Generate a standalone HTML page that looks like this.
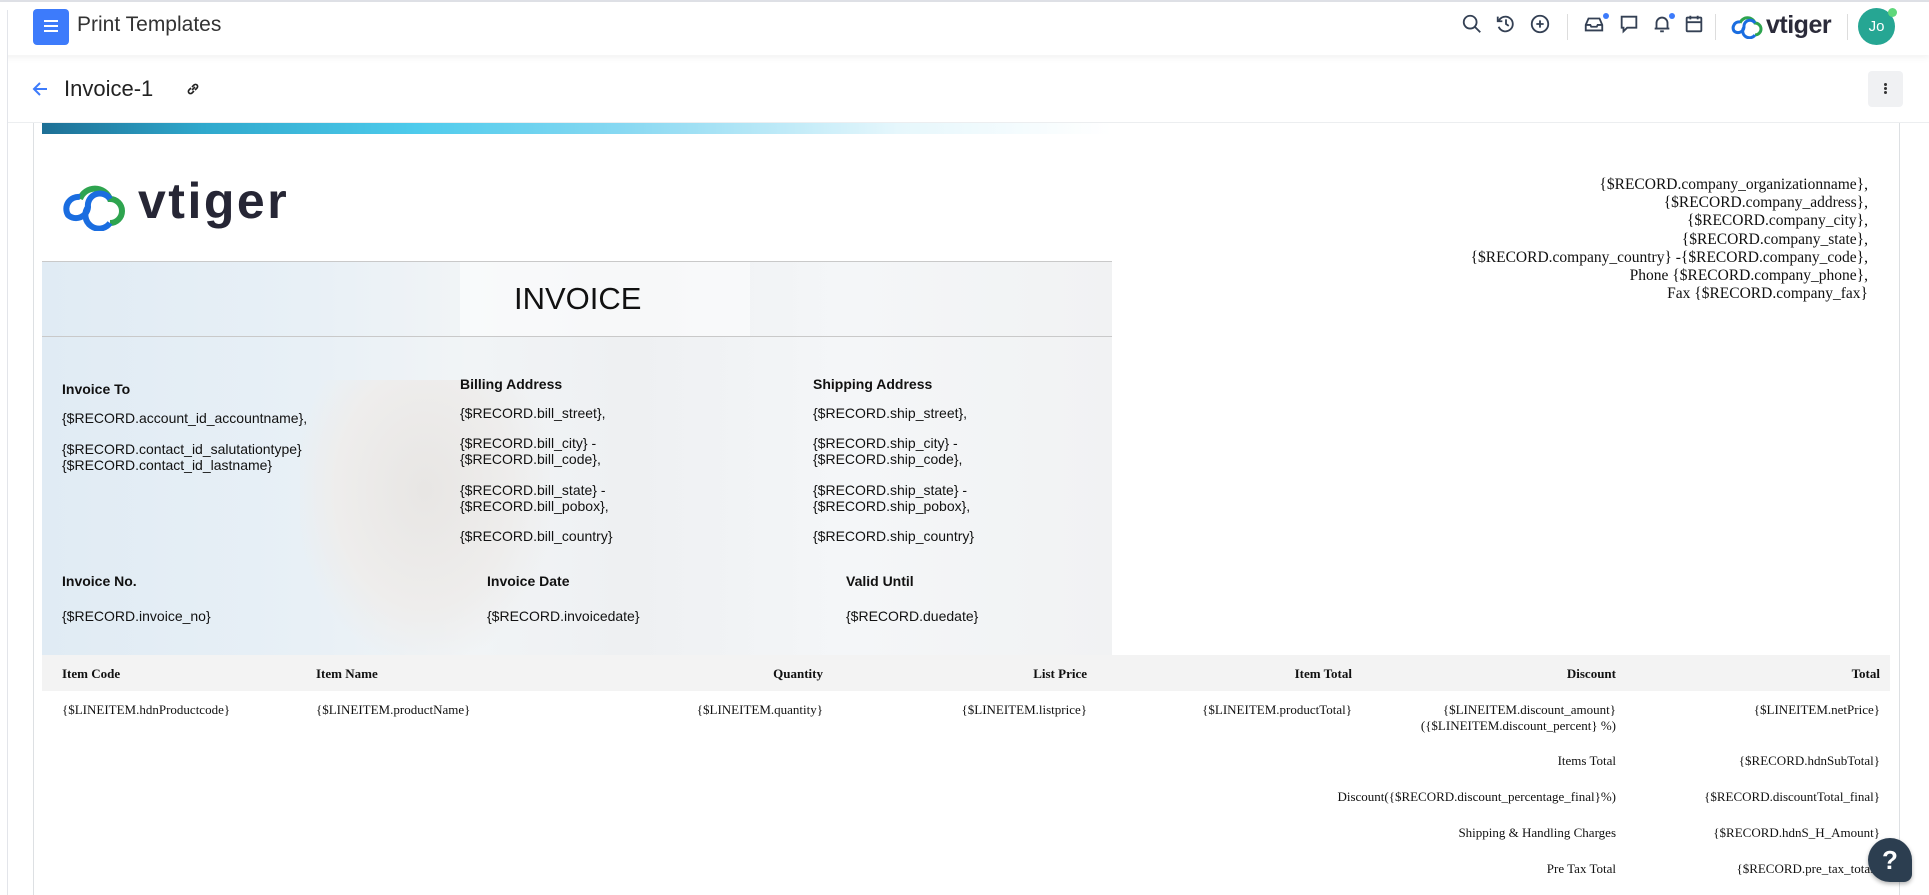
<!DOCTYPE html>
<html><head><meta charset="utf-8"><style>
*{margin:0;padding:0;box-sizing:border-box}
body{width:1929px;height:895px;overflow:hidden;background:#fff;font-family:"Liberation Sans",sans-serif;position:relative;color:#111}
.a{position:absolute;white-space:nowrap}
.s{font-family:"Liberation Sans",sans-serif;font-size:14px;line-height:16px;color:#111}
.b{font-weight:bold}
.t{font-family:"Liberation Serif",serif;font-size:13px;line-height:16px}
.r{text-align:right}
.ico{position:absolute;top:13px}
</style></head><body>
<div class="a" style="left:0;top:0;width:1929px;height:2px;background:#dfe1e6"></div>
<div class="a" style="left:0;top:2px;width:1929px;height:53px;background:#fff;box-shadow:0 3px 6px rgba(0,0,0,.05)"></div>
<div class="a" style="left:0;top:10px;width:8px;height:885px;border-right:1px solid #e3e5ea;background:#fff"></div>
<div class="a" style="left:33px;top:9px;width:36px;height:36px;background:#3d7bfb;border-radius:4px"></div>
<div class="a" style="left:44px;top:20px;width:14px;height:2px;background:#fff;box-shadow:0 5px 0 #fff,0 10px 0 #fff"></div>
<div class="a" style="left:77px;top:13px;font-size:21px;color:#333">Print Templates</div>

<svg class="ico" style="left:1461px" width="22" height="22" viewBox="0 0 24 24" fill="none" stroke="#344054" stroke-width="2"><circle cx="10" cy="10" r="7"/><path d="M15 15l6 6"/></svg>
<svg class="ico" style="left:1495px" width="22" height="22" viewBox="0 0 24 24" fill="none" stroke="#344054" stroke-width="2"><path d="M4 9a8 8 0 1 1 0 6"/><path d="M3 4v5h5"/><path d="M12 7v5l3 2"/></svg>
<svg class="ico" style="left:1529px" width="22" height="22" viewBox="0 0 24 24" fill="none" stroke="#344054" stroke-width="2"><circle cx="12" cy="12" r="9"/><path d="M12 8v8M8 12h8"/></svg>
<div class="a" style="left:1567px;top:14px;width:1px;height:26px;background:#ddd"></div>
<svg class="ico" style="left:1583px" width="22" height="22" viewBox="0 0 24 24" fill="none" stroke="#344054" stroke-width="2"><path d="M3 13l3-7h12l3 7v6H3z"/><path d="M3 13h5l1 2h6l1-2h5"/></svg>
<div class="a" style="left:1603px;top:13px;width:6px;height:6px;border-radius:3px;background:#3d7bfb"></div>
<svg class="ico" style="left:1618px" width="22" height="22" viewBox="0 0 24 24" fill="none" stroke="#344054" stroke-width="2"><path d="M4 4h16v12H10l-4 4v-4H4z"/></svg>
<svg class="ico" style="left:1651px" width="22" height="22" viewBox="0 0 24 24" fill="none" stroke="#344054" stroke-width="2"><path d="M6 17V11a6 6 0 0 1 12 0v6H6zM4 17h16M10 20h4"/></svg>
<div class="a" style="left:1669px;top:13px;width:6px;height:6px;border-radius:3px;background:#3d7bfb"></div>
<svg class="ico" style="left:1683px" width="22" height="22" viewBox="0 0 24 24" fill="none" stroke="#344054" stroke-width="2"><rect x="4" y="5" width="16" height="15" rx="1"/><path d="M4 10h16M8 3v4M16 3v4"/></svg>
<div class="a" style="left:1715px;top:14px;width:1px;height:26px;background:#ddd"></div>
<svg class="a" style="left:1731px;top:15px" width="34" height="24" viewBox="0 0 34 24" fill="none" stroke-width="3"><path d="M9 8a8 8 0 0 1 15 0 6 6 0 0 1 0 12" stroke="#2ea44f"/><path d="M24 8a6 6 0 0 0-11 4 6 6 0 0 1-10 4 6 6 0 0 1 6-9" stroke="#1a6de0"/><path d="M13 12a6 6 0 0 0 11 8" stroke="#1a6de0"/></svg>
<div class="a" style="left:1766px;top:11px;font-size:25px;font-weight:bold;color:#2b2b3a;letter-spacing:-0.5px">vtiger</div>
<div class="a" style="left:1847px;top:14px;width:1px;height:26px;background:#ddd"></div>
<div class="a" style="left:1858px;top:8px;width:37px;height:37px;border-radius:50%;background:#26a693;color:#fff;font-size:15px;line-height:37px;text-align:center">Jo</div>
<div class="a" style="left:1888px;top:8px;width:9px;height:9px;border-radius:50%;background:#5fd77b"></div>

<svg class="a" style="left:31px;top:80px" width="18" height="18" viewBox="0 0 18 18" fill="none" stroke="#3d7bfb" stroke-width="2"><path d="M16 9H3M9 3L3 9l6 6"/></svg>
<div class="a" style="left:64px;top:76px;font-size:22px;color:#222">Invoice-1</div>
<svg class="a" style="left:186px;top:82px" width="14" height="14" viewBox="0 0 14 14" fill="none" stroke="#222" stroke-width="1.6"><path d="M6 8l3-3M5 6L3 8a2 2 0 0 0 3 3l2-2M9 8l2-2a2 2 0 0 0-3-3L6 5"/></svg>
<div class="a" style="left:1868px;top:71px;width:35px;height:36px;border-radius:4px;background:#f0f1f3"></div>
<div class="a" style="left:1884px;top:83px;width:3px;height:3px;background:#333;border-radius:2px;box-shadow:0 4px 0 #333,0 8px 0 #333"></div>
<div class="a" style="left:8px;top:122px;width:1921px;height:1px;background:#eceef0"></div>

<div class="a" style="left:33px;top:123px;width:1px;height:772px;background:#dde0e3"></div>
<div class="a" style="left:1899px;top:123px;width:1px;height:772px;background:#dde0e3"></div>
<div class="a" style="left:42px;top:123px;width:1070px;height:11px;background:linear-gradient(90deg,#1d6f95 0%,#2fa8cc 15%,#4ecbec 35%,#8ad9f2 55%,#e6f7fc 80%,#fff 100%)"></div>

<div class="a" style="left:42px;top:261px;width:1070px;height:395px;background:linear-gradient(90deg,#e0ebf4 0%,#e8f0f6 25%,#f1f4f6 40%,#eef0f2 55%,#f4f6f8 75%,#f1f2f3 100%)"></div>
<div class="a" style="left:300px;top:380px;width:250px;height:276px;background:radial-gradient(ellipse at 50% 40%,#e8e6e4 0%,#eeedec 50%,rgba(240,241,242,0) 75%)"></div>
<div class="a" style="left:460px;top:261px;width:290px;height:75px;background:rgba(255,255,255,.5)"></div>
<div class="a" style="left:42px;top:261px;width:1070px;height:1px;background:#c9c9c9"></div>
<div class="a" style="left:42px;top:336px;width:1070px;height:1px;background:#c9c9c9"></div>

<svg class="a" style="left:62px;top:183px" width="70" height="48" viewBox="0 0 70 48" fill="none" stroke-width="6"><path d="M18 16a16 16 0 0 1 30 0 12 12 0 0 1 0 24" stroke="#2ea44f"/><path d="M48 16a12 12 0 0 0-22 8 12 12 0 0 1-20 8 12 12 0 0 1 12-18" stroke="#1a6de0"/><path d="M26 24a12 12 0 0 0 22 16" stroke="#1a6de0"/></svg>
<div class="a" style="left:138px;top:172px;font-size:50px;font-weight:bold;color:#262635;letter-spacing:2.5px">vtiger</div>

<div class="a" style="left:514px;top:281px;font-size:31px;color:#111">INVOICE</div>

<div class="a r" style="right:61px;top:176px;font-family:'Liberation Serif',serif;font-size:15.5px;line-height:18.2px;color:#111">{$RECORD.company_organizationname},<br>{$RECORD.company_address},<br>{$RECORD.company_city},<br>{$RECORD.company_state},<br>{$RECORD.company_country} -{$RECORD.company_code},<br>Phone {$RECORD.company_phone},<br>Fax {$RECORD.company_fax}</div>

<div class="a s b" style="left:62px;top:381px">Invoice To</div>
<div class="a s" style="left:62px;top:410px">{$RECORD.account_id_accountname},</div>
<div class="a s" style="left:62px;top:441px">{$RECORD.contact_id_salutationtype}<br>{$RECORD.contact_id_lastname}</div>

<div class="a s b" style="left:460px;top:376px">Billing Address</div>
<div class="a s" style="left:460px;top:405px">{$RECORD.bill_street},</div>
<div class="a s" style="left:460px;top:435px">{$RECORD.bill_city} -<br>{$RECORD.bill_code},</div>
<div class="a s" style="left:460px;top:482px">{$RECORD.bill_state} -<br>{$RECORD.bill_pobox},</div>
<div class="a s" style="left:460px;top:528px">{$RECORD.bill_country}</div>

<div class="a s b" style="left:813px;top:376px">Shipping Address</div>
<div class="a s" style="left:813px;top:405px">{$RECORD.ship_street},</div>
<div class="a s" style="left:813px;top:435px">{$RECORD.ship_city} -<br>{$RECORD.ship_code},</div>
<div class="a s" style="left:813px;top:482px">{$RECORD.ship_state} -<br>{$RECORD.ship_pobox},</div>
<div class="a s" style="left:813px;top:528px">{$RECORD.ship_country}</div>

<div class="a s b" style="left:62px;top:573px">Invoice No.</div>
<div class="a s" style="left:62px;top:608px">{$RECORD.invoice_no}</div>
<div class="a s b" style="left:487px;top:573px">Invoice Date</div>
<div class="a s" style="left:487px;top:608px">{$RECORD.invoicedate}</div>
<div class="a s b" style="left:846px;top:573px">Valid Until</div>
<div class="a s" style="left:846px;top:608px">{$RECORD.duedate}</div>

<div class="a" style="left:42px;top:655px;width:1848px;height:36px;background:#f3f3f3"></div>
<div class="a t b" style="left:62px;top:666px">Item Code</div>
<div class="a t b" style="left:316px;top:666px">Item Name</div>
<div class="a t b r" style="right:1106px;top:666px">Quantity</div>
<div class="a t b r" style="right:842px;top:666px">List Price</div>
<div class="a t b r" style="right:577px;top:666px">Item Total</div>
<div class="a t b r" style="right:313px;top:666px">Discount</div>
<div class="a t b r" style="right:49px;top:666px">Total</div>

<div class="a t" style="left:62px;top:702px">{$LINEITEM.hdnProductcode}</div>
<div class="a t" style="left:316px;top:702px">{$LINEITEM.productName}</div>
<div class="a t r" style="right:1106px;top:702px">{$LINEITEM.quantity}</div>
<div class="a t r" style="right:842px;top:702px">{$LINEITEM.listprice}</div>
<div class="a t r" style="right:577px;top:702px">{$LINEITEM.productTotal}</div>
<div class="a t r" style="right:313px;top:702px">{$LINEITEM.discount_amount}<br>({$LINEITEM.discount_percent} %)</div>
<div class="a t r" style="right:49px;top:702px">{$LINEITEM.netPrice}</div>

<div class="a t r" style="right:313px;top:753px">Items Total</div>
<div class="a t r" style="right:49px;top:753px">{$RECORD.hdnSubTotal}</div>
<div class="a t r" style="right:313px;top:789px">Discount({$RECORD.discount_percentage_final}%)</div>
<div class="a t r" style="right:49px;top:789px">{$RECORD.discountTotal_final}</div>
<div class="a t r" style="right:313px;top:825px">Shipping &amp; Handling Charges</div>
<div class="a t r" style="right:49px;top:825px">{$RECORD.hdnS_H_Amount}</div>
<div class="a t r" style="right:313px;top:861px">Pre Tax Total</div>
<div class="a t r" style="right:49px;top:861px">{$RECORD.pre_tax_total}</div>

<div class="a" style="left:1868px;top:838px;width:44px;height:44px;border-radius:50% 50% 8px 50%;background:#2c3e50;color:#fff;font-size:26px;font-weight:bold;text-align:center;line-height:44px;box-shadow:0 2px 4px rgba(0,0,0,.3)">?</div>
</body></html>
